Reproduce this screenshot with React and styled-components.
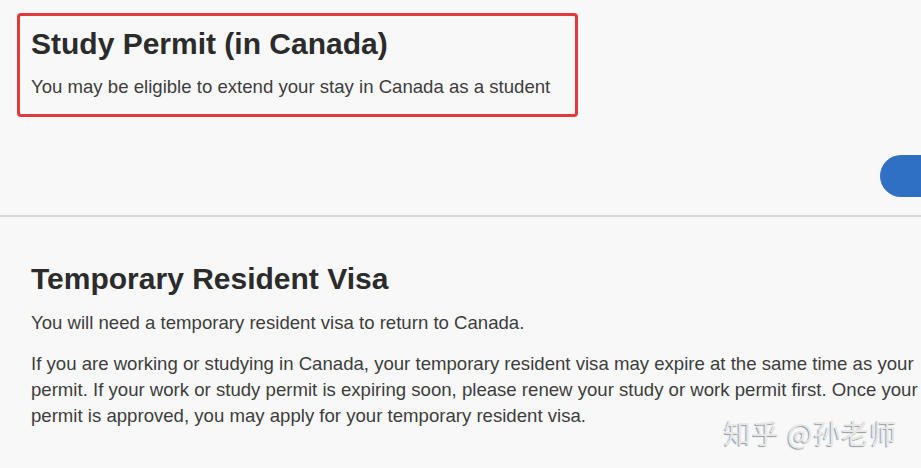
import React from 'react'
import styled, { createGlobalStyle } from 'styled-components'

const GlobalStyle = createGlobalStyle`
  html, body {
    margin: 0;
    padding: 0;
    background: #f8f8f8;
  }
  body {
    font-family: "Liberation Sans", Arial, sans-serif;
    color: #333;
    overflow: hidden;
  }
`

const Page = styled.div`
  width: 921px;
  height: 468px;
  overflow: hidden;
  position: relative;
`

const TopArea = styled.div`
  padding: 13px 0 0 17px;
`

const Highlight = styled.div`
  box-sizing: border-box;
  width: 561px;
  height: 104px;
  border: 3px solid #e23a3a;
  border-radius: 4px;
  padding: 13px 0 0 11px;
`

const Title = styled.h2`
  margin: 0;
  font-size: 30px;
  line-height: 1;
  font-weight: bold;
  color: #2b2b2b;
`

const Lead = styled.p`
  margin: 0;
  font-size: 18.6px;
  line-height: 22px;
  color: #3d3d3d;
`

const HeaderLead = styled(Lead)`
  margin-top: 17px;
`

const ActionRow = styled.div`
  display: flex;
  justify-content: flex-end;
  margin-top: 38px;
  height: 42px;
  overflow: hidden;
`

const PillButton = styled.button`
  width: 41px;
  height: 42px;
  border: none;
  padding: 0;
  background: #2f6fc4;
  border-radius: 21px 0 0 21px;
`

const Divider = styled.hr`
  margin: 18px 0 0;
  border: none;
  border-top: 2px solid #dadada;
`

const Section = styled.section`
  padding: 47px 0 0 31px;
`

const Body = styled(Lead)`
  margin-top: ${p => p.gap || 0}px;
  line-height: 26px;
  width: 890px;
`

const Watermark = styled.div`
  position: absolute;
  left: 724px;
  top: 413px;
  font-family: "Noto Sans CJK SC", sans-serif;
  font-size: 27px;
  color: #e8e8e8;
  text-shadow: -1px 1px 1px #9a9a9a;
  letter-spacing: 1px;
`

export default function App() {
  return (
    <Page>
      <GlobalStyle />
      <TopArea>
        <Highlight>
          <Title>Study Permit (in Canada)</Title>
          <HeaderLead>You may be eligible to extend your stay in Canada as a student</HeaderLead>
        </Highlight>
      </TopArea>
      <ActionRow>
        <PillButton aria-label="Apply" />
      </ActionRow>
      <Divider />
      <Section>
        <Title>Temporary Resident Visa</Title>
        <Body gap={16}>You will need a temporary resident visa to return to Canada.</Body>
        <Body gap={15}>
          If you are working or studying in Canada, your temporary resident visa may expire at the same time as your
          permit. If your work or study permit is expiring soon, please renew your study or work permit first. Once your
          permit is approved, you may apply for your temporary resident visa.
        </Body>
      </Section>
      <Watermark>知乎 @孙老师</Watermark>
    </Page>
  )
}
